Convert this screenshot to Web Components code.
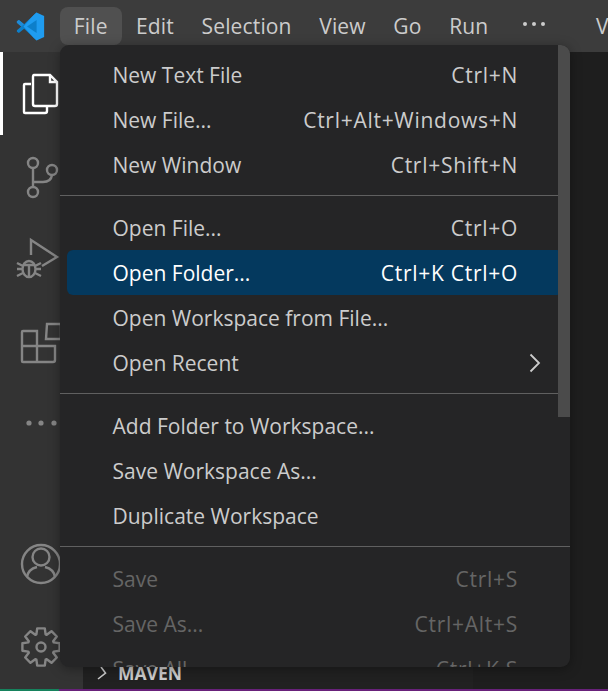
<!DOCTYPE html>
<html><head><meta charset="utf-8"><style>
html,body{margin:0;height:100%;background:#1e1e1e;overflow:hidden}
body{font-family:"Open Sans","Noto Sans",sans-serif;color:#ccc}
</style></head><body>
<vs-window></vs-window>
<template id="t-item"><style>
:host{display:flex;align-items:center;justify-content:space-between;height:45px;margin:0 7px;padding:0 46px 0 45.5px;border-radius:6px;font-size:21px;color:#ccc;white-space:nowrap;box-sizing:border-box;flex:none;position:relative}
:host([active]){background:#04395e;color:#fff}
:host([disabled]){color:#656565}
svg{position:absolute;right:22px;top:13px}
#k{letter-spacing:.72px;margin-right:-1px}
</style><span><slot></slot></span><span id="k"></span></template>
<script>
class VsItem extends HTMLElement{constructor(){super();const s=this.attachShadow({mode:'open'});s.appendChild(document.getElementById('t-item').content.cloneNode(true));}
connectedCallback(){this.shadowRoot.getElementById('k').textContent=this.getAttribute('keys')||'';if(this.hasAttribute('sub')&&!this.shadowRoot.querySelector('svg')){const d=document.createElement('div');d.innerHTML='<svg width="12" height="20" viewBox="0 0 12 20"><path d="M1.5 1.5 10 10 1.5 18.5" fill="none" stroke="#ccc" stroke-width="1.8"/></svg>';this.shadowRoot.appendChild(d.firstChild)}}}
customElements.define('vs-item',VsItem);
class VsSep extends HTMLElement{constructor(){super();this.attachShadow({mode:'open'}).innerHTML='<style>:host{display:block;height:18px;flex:none;position:relative}div{height:1px;background:#606060;margin-top:8px}</style><div></div>'}}
customElements.define('vs-sep',VsSep);
class VsMenu extends HTMLElement{constructor(){super();this.attachShadow({mode:'open'}).innerHTML=`<style>
:host{position:absolute;left:60px;top:45px;width:510px;height:622px;background:#252526;border-radius:9px;overflow:hidden;display:flex;flex-direction:column;box-shadow:0 2px 12px rgba(0,0,0,.35);padding-top:7px;box-sizing:border-box}
.sb{position:absolute;right:0;top:0;width:12px;height:372px;background:#4b4b4b}
</style><slot></slot><div class="sb"></div>`}}
customElements.define('vs-menu',VsMenu);
class VsTitle extends HTMLElement{constructor(){super();this.attachShadow({mode:'open'}).innerHTML=`<style>
:host{display:flex;height:52px;background:#3c3c3c;font-size:21px;letter-spacing:.15px;color:#ccc;flex:none;box-sizing:border-box;align-items:flex-start;white-space:nowrap}
svg.logo{margin:12px 15px 0 16px;flex:none}
.m{height:38px;margin-top:7px;padding:0 13.8px;border-radius:8px;display:flex;align-items:center;line-height:38px;box-sizing:border-box}
.on{background:#505050;padding-right:14.6px}
.dots{margin-left:7px;padding:0 14px 0 13px;margin-top:7px;height:38px;display:flex;align-items:center}
.v{margin-left:36px;color:#ccc;margin-top:7px;line-height:38px}
</style>
<svg class="logo" width="29" height="29" viewBox="0 0 100 100">
<path d="M71 2 28 42 10 28 3 32V37L18 50 3 63V68L10 72 28 58 71 98 76 60V30Z" fill="#0d7fca"/>
<path d="M71 2 28 42 10 28 3 32V37L18 50 71 8Z" fill="#1f8ad6"/>
<path d="M71 2 97 14V86L71 98V28L38 50 71 72V98L60 88 26 50 60 12Z" fill="#1f9cf0"/></svg>
<div class="m on">File</div><div class="m">Edit</div><div class="m">Selection</div><div class="m">View</div><div class="m">Go</div><div class="m">Run</div>
<div class="dots"><svg width="24" height="6" viewBox="0 0 24 6" style="margin-top:-4px"><circle cx="3" cy="3" r="2" fill="#ccc"/><circle cx="12" cy="3" r="2" fill="#ccc"/><circle cx="21" cy="3" r="2" fill="#ccc"/></svg></div>
<div class="v">V</div>`}}
customElements.define('vs-title',VsTitle);
class VsActivity extends HTMLElement{constructor(){super();
const pts=[];const n=8;for(let i=0;i<n;i++){const a=i*2*Math.PI/n-Math.PI/2;const w=0.2,w2=0.35;const P=(r,t)=>[(20+r*Math.cos(t)).toFixed(1),(20+r*Math.sin(t)).toFixed(1)].join(' ');pts.push(P(19,a-w),P(19,a+w),P(13.5,a+w2),P(13.5,a+Math.PI/4-w2));}
const g='M'+pts.join('L')+'Z';
this.attachShadow({mode:'open'}).innerHTML=`<style>
:host{display:flex;flex-direction:column;width:83px;background:#333;flex:none;position:relative;align-items:center;box-sizing:border-box}
.ic{display:flex;justify-content:center;align-items:center;height:83px;width:83px;flex:none;position:relative}
.act::before{content:"";position:absolute;left:0;top:0;width:3px;height:83px;background:#fff}
svg{fill:none;stroke:#858585;stroke-width:2.4;overflow:visible}
.sp{flex:1}
</style>
<div class="ic act"><svg width="40" height="42" viewBox="0 0 40 42" style="stroke:#fff;stroke-width:2.4"><path d="M9 11H3Q2 11 2 12V39Q2 40 3 40H23Q25 40 25 38V33"/><path d="M12 2H28L35 9V31Q35 33 33 33H13Q11 33 11 31V4Q11 2 12 2ZM28 2V9H35"/></svg></div>
<div class="ic"><svg width="34" height="42" viewBox="0 0 34 42"><circle cx="8" cy="7" r="5"/><circle cx="8" cy="36" r="5"/><circle cx="27" cy="14" r="5"/><path d="M8 12V31M27 19Q26 26 18 26H8"/></svg></div>
<div class="ic"><svg width="44" height="42" viewBox="0 0 44 42" style="margin-right:4px"><path d="M13 16V1L39 18 24 27"/><ellipse cx="11" cy="30" rx="6.5" ry="8"/><path d="M5 26H17M-1 24 5 27M23 24 17 27M-1 30H4M18 30H23M-1 37 5 34M23 37 17 34M11 26V38"/></svg></div>
<div class="ic"><svg width="42" height="42" viewBox="0 0 42 42" style="margin-left:-2px"><path d="M3 9H17V40H3Q2 40 2 39V10Q2 9 3 9ZM2 24H35V38Q35 40 33 40H17"/><path d="M27 2H41V17H26Z"/></svg></div>
<div class="ic" style="height:78px"><svg width="30" height="6" viewBox="0 0 30 6" style="margin-left:-1px;fill:#858585;stroke:none"><circle cx="3" cy="3" r="2.6"/><circle cx="15" cy="3" r="2.6"/><circle cx="28" cy="3" r="2.6"/></svg></div>
<div class="sp"></div>
<div class="ic" style="margin-left:-1px"><svg width="40" height="40" viewBox="0 0 40 40"><circle cx="20" cy="20" r="19"/><circle cx="20" cy="13" r="8.5"/><path d="M6 33C7 26 12 24 16 23M34 33C33 26 28 24 24 23"/></svg></div>
<div class="ic" style="margin-left:-1px;margin-bottom:1px"><svg width="40" height="40" viewBox="0 0 40 40" stroke-linejoin="round"><path d="${g}"/><circle cx="20" cy="20" r="4.5"/></svg></div>`}}
customElements.define('vs-activity',VsActivity);
class VsSide extends HTMLElement{constructor(){super();this.attachShadow({mode:'open'}).innerHTML=`<style>
:host{flex:1;display:flex;flex-direction:column;justify-content:flex-end;background:#1e1e1e}
.r{height:33px;display:flex;align-items:center;font-size:17.5px;font-weight:700;color:#ccc;padding-left:13px;gap:11px;width:390px;box-sizing:border-box;background:#212121}
</style><div class="r"><svg width="11" height="16" viewBox="0 0 11 16"><path d="M2 14 9.5 8 5 2" fill="none" stroke="#ccc" stroke-width="1.6"/></svg><span>MAVEN</span></div>`}}
customElements.define('vs-side',VsSide);
class VsStatus extends HTMLElement{constructor(){super();this.attachShadow({mode:'open'}).innerHTML=`<style>
:host{display:flex;height:2px;flex:none;background:#68217a}
div{width:59px;background:#16825d}
</style><div></div>`}}
customElements.define('vs-status',VsStatus);
class VsWindow extends HTMLElement{constructor(){super();this.attachShadow({mode:'open'}).innerHTML=`<style>
:host{display:flex;flex-direction:column;height:691px;width:608px;position:relative;overflow:hidden}
.main{flex:1;display:flex;min-height:0}
</style><vs-title></vs-title><div class="main"><vs-activity></vs-activity><vs-side></vs-side></div><vs-status></vs-status>
<vs-menu>
<vs-item keys="Ctrl+N">New Text File</vs-item><vs-item keys="Ctrl+Alt+Windows+N">New File...</vs-item><vs-item keys="Ctrl+Shift+N">New Window</vs-item>
<vs-sep></vs-sep>
<vs-item keys="Ctrl+O">Open File...</vs-item><vs-item keys="Ctrl+K Ctrl+O" active>Open Folder...</vs-item><vs-item>Open Workspace from File...</vs-item><vs-item sub>Open Recent</vs-item>
<vs-sep></vs-sep>
<vs-item>Add Folder to Workspace...</vs-item><vs-item>Save Workspace As...</vs-item><vs-item>Duplicate Workspace</vs-item>
<vs-sep></vs-sep>
<vs-item keys="Ctrl+S" disabled>Save</vs-item><vs-item keys="Ctrl+Alt+S" disabled>Save As...</vs-item><vs-item keys="Ctrl+K S" disabled>Save All</vs-item>
</vs-menu>`}}
customElements.define('vs-window',VsWindow);
</script>
</body></html>
